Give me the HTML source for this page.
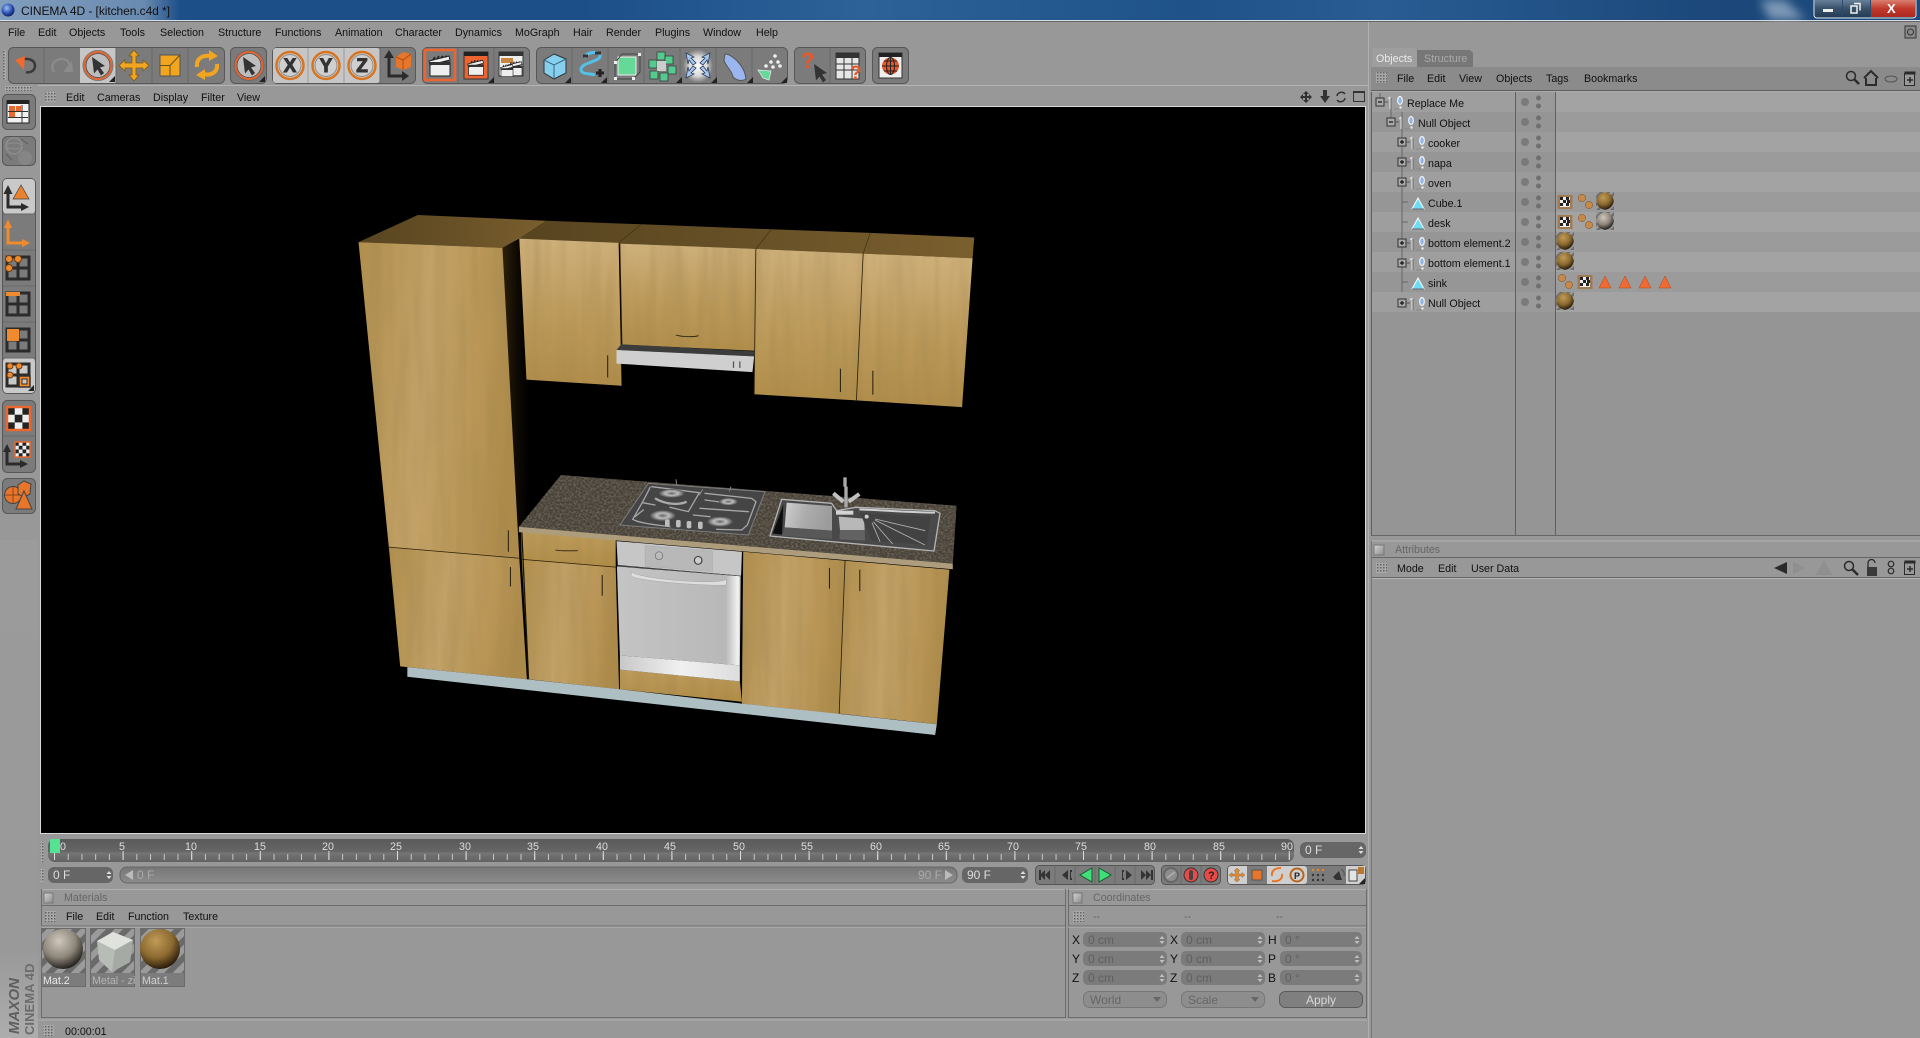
<!DOCTYPE html>
<html lang="en"><head><meta charset="utf-8"><title>CINEMA 4D - [kitchen.c4d *]</title>
<style>
html,body{margin:0;padding:0;background:#989898;width:1920px;height:1038px;overflow:hidden}
svg{display:block;position:absolute;left:0;top:0}
text{font-family:"Liberation Sans",sans-serif;font-size:10.7px;fill:#111}
.dim{fill:#666}.lt{fill:#ddd}.fld{fill:#5f5f5f;font-size:12px}.w{fill:#e8e8e8}
</style></head><body>
<svg width="1920" height="1038" viewBox="0 0 1920 1038" xmlns="http://www.w3.org/2000/svg">
<defs>
<pattern id="gr" width="3" height="3" patternUnits="userSpaceOnUse"><rect width="3" height="3" fill="#a8a8a8"/><rect width="1.500" height="1.500" fill="#626262"/></pattern>
<pattern id="hat" width="12" height="12" patternUnits="userSpaceOnUse" patternTransform="rotate(45)"><rect width="12" height="12" fill="#9b9b9b"/><rect width="6" height="12" fill="#6a6a6a"/></pattern>
<pattern id="hat2" width="5" height="5" patternUnits="userSpaceOnUse" patternTransform="rotate(45)"><rect width="5" height="5" fill="#9a9a9a"/><rect width="2.500" height="5" fill="#6e6e6e"/></pattern>
<pattern id="tk" x="54" y="0" width="13.72" height="20" patternUnits="userSpaceOnUse"><rect width="1" height="20" fill="#c8c8c8"/></pattern>
<pattern id="tkb" x="54" y="0" width="68.6" height="20" patternUnits="userSpaceOnUse"><rect width="1" height="20" fill="#dcdcdc"/></pattern>
<pattern id="chk2" x="7" y="407" width="15.400" height="15.400" patternUnits="userSpaceOnUse"><rect width="15.400" height="15.400" fill="#eee"/><rect width="7.700" height="7.700" fill="#222"/><rect x="7.700" y="7.700" width="7.700" height="7.700" fill="#222"/></pattern>
<pattern id="chk3" x="15" y="442" width="7.500" height="7.500" patternUnits="userSpaceOnUse"><rect width="7.500" height="7.500" fill="#eee"/><rect width="3.750" height="3.750" fill="#222"/><rect x="3.750" y="3.750" width="3.750" height="3.750" fill="#222"/></pattern>
<linearGradient id="tb" x1="0" x2="1" y1="0" y2="0"><stop offset="0" stop-color="#1d4f88"/><stop offset=".3" stop-color="#1c4e88"/><stop offset=".45" stop-color="#2c6298"/><stop offset=".62" stop-color="#1e5288"/><stop offset=".72" stop-color="#285c92"/><stop offset=".9" stop-color="#1b477a"/><stop offset="1" stop-color="#1d4a7c"/></linearGradient>
<linearGradient id="gl" x1="0" x2="1" y1="0" y2="0"><stop offset="0" stop-color="#fff" stop-opacity=".6"/><stop offset=".8" stop-color="#fff" stop-opacity=".45"/><stop offset="1" stop-color="#fff" stop-opacity="0"/></linearGradient>
<linearGradient id="btn" x1="0" x2="0" y1="0" y2="1"><stop offset="0" stop-color="#9ab" stop-opacity=".55"/><stop offset=".5" stop-color="#456" stop-opacity=".6"/><stop offset="1" stop-color="#234" stop-opacity=".6"/></linearGradient>
<linearGradient id="cl" x1="0" x2="0" y1="0" y2="1"><stop offset="0" stop-color="#d98070"/><stop offset=".5" stop-color="#c2392b"/><stop offset="1" stop-color="#a82a20"/></linearGradient>
<linearGradient id="str" x1="0" x2="0" y1="0" y2="1"><stop offset="0" stop-color="#9c9c9c"/><stop offset=".82" stop-color="#999"/><stop offset="1" stop-color="#b2b2b2"/></linearGradient>
<linearGradient id="tl" x1="0" x2="0" y1="0" y2="1"><stop offset="0" stop-color="#5a5a5a"/><stop offset=".55" stop-color="#666"/><stop offset=".6" stop-color="#757575"/><stop offset="1" stop-color="#626262"/></linearGradient>
<linearGradient id="sl" x1="0" x2="0" y1="0" y2="1"><stop offset="0" stop-color="#777"/><stop offset="1" stop-color="#8c8c8c"/></linearGradient>
<linearGradient id="box" x1="0" y1="0" x2="1" y2="1"><stop offset="0" stop-color="#d4d4d4"/><stop offset="1" stop-color="#8a8a8a"/></linearGradient>
<linearGradient id="w1" x1="0" x2="1" y1="0" y2=".15"><stop offset="0" stop-color="#b08e4e"/><stop offset=".45" stop-color="#c3a268"/><stop offset=".8" stop-color="#b99657"/><stop offset="1" stop-color="#ad8b4c"/></linearGradient>
<linearGradient id="w2" x1="0" x2="0" y1="0" y2="1"><stop offset="0" stop-color="#ceb07a"/><stop offset=".5" stop-color="#be9c5e"/><stop offset="1" stop-color="#b08d4a"/></linearGradient>
<linearGradient id="w3" x1="0" x2="0" y1="0" y2="1"><stop offset="0" stop-color="#bd9b5a"/><stop offset="1" stop-color="#b08d48"/></linearGradient>
<linearGradient id="tp" x1="0" x2="1" y1="0" y2="0"><stop offset="0" stop-color="#574420"/><stop offset=".5" stop-color="#675026"/><stop offset="1" stop-color="#7a5f2e"/></linearGradient>
<linearGradient id="sd" x1="0" x2="1" y1="0" y2="0"><stop offset="0" stop-color="#2e2009"/><stop offset=".55" stop-color="#0d0903"/><stop offset="1" stop-color="#000"/></linearGradient>
<linearGradient id="ov" x1="0" x2="1" y1="0" y2="0"><stop offset="0" stop-color="#c4c4c4"/><stop offset=".88" stop-color="#b8b8b8"/><stop offset=".98" stop-color="#f4f4f4"/><stop offset="1" stop-color="#bbb"/></linearGradient>
<linearGradient id="ovb" x1="0" x2="1" y1="0" y2="0"><stop offset="0" stop-color="#c8c8c8"/><stop offset=".5" stop-color="#f0f0f0"/><stop offset="1" stop-color="#ddd"/></linearGradient>
<linearGradient id="bas" x1="0" x2="1" y1="0" y2=".2"><stop offset="0" stop-color="#d0d0d0"/><stop offset=".5" stop-color="#acacac"/><stop offset="1" stop-color="#9c9c9c"/></linearGradient>
<radialGradient id="sb" cx=".4" cy=".3" r=".75"><stop offset="0" stop-color="#c09a58"/><stop offset=".55" stop-color="#8c6a30"/><stop offset="1" stop-color="#1b1206"/></radialGradient>
<radialGradient id="sg" cx=".4" cy=".3" r=".75"><stop offset="0" stop-color="#cfc7bb"/><stop offset=".55" stop-color="#8f877c"/><stop offset="1" stop-color="#15130f"/></radialGradient>
<radialGradient id="glow"><stop offset="0" stop-color="#fff"/><stop offset=".6" stop-color="#eee" stop-opacity=".8"/><stop offset="1" stop-color="#ccc" stop-opacity="0"/></radialGradient>
<radialGradient id="bl" cx=".4" cy=".35" r=".7"><stop offset="0" stop-color="#9cc0f0"/><stop offset=".6" stop-color="#2a4fb0"/><stop offset="1" stop-color="#0b1a50"/></radialGradient>
<radialGradient id="burn"><stop offset="0" stop-color="#666"/><stop offset=".5" stop-color="#bdbdbd"/><stop offset="1" stop-color="#505050"/></radialGradient>
<filter id="grain" x="0" y="0" width="100%" height="100%"><feTurbulence type="fractalNoise" baseFrequency=".04 .003" numOctaves="2" seed="4"/><feColorMatrix values="0 0 0 0 .35  0 0 0 0 .24  0 0 0 0 .08  .75 0 0 0 -.26"/><feComposite in2="SourceAlpha" operator="in" result="n"/><feMerge><feMergeNode in="SourceGraphic"/><feMergeNode in="n"/></feMerge></filter>
<filter id="spk" x="0" y="0" width="100%" height="100%"><feTurbulence type="fractalNoise" baseFrequency=".18" numOctaves="2" seed="7"/><feColorMatrix values="0 0 0 0 .5  0 0 0 0 .45  0 0 0 0 .38  .5 0 0 0 -.2"/><feComposite in2="SourceAlpha" operator="in" result="n"/><feMerge><feMergeNode in="SourceGraphic"/><feMergeNode in="n"/></feMerge></filter>
<filter id="blr"><feGaussianBlur stdDeviation="5"/></filter>
<filter id="sft"><feGaussianBlur stdDeviation=".55"/></filter>

<polygon id="cur" points="-6,-8 7,1 2,2.5 6,8 3,10.5 -.5,4.5 -4,8.5" fill="#333"/>
<g id="ring"><circle r="13.5" fill="#bdbdbd" stroke="#e5632c" stroke-width="2"/><circle r="15" fill="none" stroke="#666" stroke-width=".8"/><circle r="12" fill="none" stroke="#444" stroke-width=".8"/></g>
<polygon id="sub" points="0,6 6,6 6,0" fill="#222"/>
<path id="grid" d="M-11-11H11V11H-11ZM0-11V11M-11 0H11" fill="none" stroke="#2b2b2b" stroke-width="3"/>
<g id="clap"><rect x="-10" y="-3" width="20" height="14" fill="#eee" stroke="#222"/><path d="M-11-4 9-9 10-5-10 0Z" fill="#eee" stroke="#222"/><path d="M-7-5-5-8M-3-6-1-9M1-7 3-9M5-8 7-9" stroke="#222" stroke-width="1.6"/><rect x="-10" y="-3" width="20" height="3" fill="#333"/></g>
<g id="nul"><path d="M-9-5V7M-9-5-11-3" fill="none" stroke="#e6e6e6"/><path d="M-8-4V7" stroke="#666"/><path d="M-5 7H0" stroke="#888"/><ellipse cx="1" cy="-1.500" rx="2.300" ry="4" fill="#8fb4e6" stroke="#f2f2f2" stroke-width="1.200"/><circle cx="1.500" cy="5.500" r="1.200" fill="#eee"/></g>
<g id="tri"><polygon points="-6,6 0,-5 6,6" fill="#6fdcf5" stroke="#fff"/><path d="M-6 6H6" stroke="#445" stroke-width=".8"/></g>
<g id="pm"><rect x="-4" y="-4" width="8" height="8" fill="#a9a9a9" stroke="#333"/><path d="M-2 0H2M0-2V2" stroke="#111" stroke-width="1.2"/><path d="M4 0H8" stroke="#555"/></g>
<g id="mn"><rect x="-4" y="-4" width="8" height="8" fill="#a9a9a9" stroke="#333"/><path d="M-2 0H2" stroke="#111" stroke-width="1.2"/><path d="M4 0H8" stroke="#555"/></g>
<g id="dts"><circle cx="0" cy="0" r="4" fill="#7a7a7a"/><circle cx="13.500" cy="-4" r="2.500" fill="#6f6f6f"/><circle cx="13.500" cy="4" r="2.500" fill="#6f6f6f"/></g>
<g id="tck"><rect x="-7.500" y="-7" width="15" height="14" fill="#a07a50"/><rect x="-5" y="-5" width="10" height="10" fill="#eee"/><path d="M-5-5h3v3h-3zM1-5h3v3h-3zM-2-2h3v3h-3zM2-2h3v3h-3zM-5 1h3v3h-3zM1 1h3v3h-3z" fill="#222"/></g>
<g id="tdots"><circle cx="-3" cy="-4" r="3.600" fill="#c58a4a" stroke="#8a5a2a" stroke-width=".6"/><circle cx="4" cy="3" r="3.600" fill="#c58a4a" stroke="#8a5a2a" stroke-width=".6"/></g>
<g id="tsb"><rect x="-9" y="-9" width="18" height="18" fill="url(#hat2)"/><circle r="8.500" fill="url(#sb)"/></g>
<g id="tsg"><rect x="-9" y="-9" width="18" height="18" fill="url(#hat2)"/><circle r="8.500" fill="url(#sg)"/></g>
<polygon id="ttr" points="-6,6 0,-6 6,6" fill="#f06a33" stroke="#a34a22" stroke-width=".5"/>
<g id="spin"><path d="M-2.500-1 0-4 2.500-1ZM-2.500 1 0 4 2.500 1Z" fill="#ddd"/></g>
</defs>

<!-- window chrome -->
<rect width="1920" height="1038" fill="#989898"/>
<rect width="1920" height="21" fill="url(#tb)"/>
<rect y="20" width="1920" height="1" fill="#d5dde6"/>
<rect y="21" width="1920" height="1" fill="#666"/>
<rect x="0" y="0" width="180" height="20" fill="url(#gl)" opacity=".75"/>
<path d="M1760 0H1785L1806 20H1770Z" fill="#cfdde8" opacity=".55" filter="url(#blr)"/>
<circle cx="8" cy="10" r="6.500" fill="url(#bl)"/>
<text x="21" y="15" style="font-size:12px" textLength="149">CINEMA 4D - [kitchen.c4d *]</text>
<rect x="1814" y="-2" width="102" height="20" rx="3" fill="#2a4a6e" stroke="#dfe7ef"/>
<rect x="1815" y="0" width="27" height="17" fill="url(#btn)"/><rect x="1843" y="0" width="27" height="17" fill="url(#btn)"/><rect x="1871" y="0" width="44" height="17" fill="url(#cl)"/>
<rect x="1823" y="9" width="10" height="3" fill="#eee"/>
<path d="M1851 6h6v7h-6zM1854 3.500h6v7" fill="none" stroke="#eee" stroke-width="1.500"/>
<text x="1887" y="13" style="font-size:13px;font-weight:bold;fill:#fff">X</text>
<g><rect x="1905" y="26" width="11" height="12" fill="#8a8a8a" stroke="#333"/><circle cx="1910.500" cy="32" r="3" fill="none" stroke="#333"/></g>

<!-- main menu -->
<text x="8" y="36">File</text><text x="38" y="36">Edit</text><text x="69" y="36">Objects</text><text x="120" y="36">Tools</text><text x="160" y="36">Selection</text><text x="218" y="36">Structure</text><text x="275" y="36">Functions</text><text x="335" y="36">Animation</text><text x="395" y="36">Character</text><text x="455" y="36">Dynamics</text><text x="515" y="36">MoGraph</text><text x="573" y="36">Hair</text><text x="606" y="36">Render</text><text x="655" y="36">Plugins</text><text x="703" y="36">Window</text><text x="756" y="36">Help</text>

<!-- grips -->
<rect x="3" y="50" width="3" height="30" fill="url(#gr)"/>
<rect x="5" y="86" width="27" height="5" fill="url(#gr)"/>
<rect x="45" y="91" width="11" height="11" fill="url(#gr)"/>
<rect y="85" x="38" width="1330" height="1" fill="#b4b4b4"/>

<!-- top toolbar groups -->
<g fill="#7b7b7b" stroke="#585858">
<rect x="8.500" y="47.500" width="216" height="36" rx="5"/><rect x="230.500" y="47.500" width="36" height="36" rx="5"/><rect x="272.500" y="47.500" width="143" height="36" rx="5"/><rect x="422.500" y="47.500" width="107" height="36" rx="5"/><rect x="536.500" y="47.500" width="251" height="36" rx="5"/><rect x="794.500" y="47.500" width="71" height="36" rx="5"/><rect x="872.500" y="47.500" width="36" height="36" rx="5"/>
</g>
<g fill="#c6c6c6"><rect x="80" y="48" width="36" height="35"/><rect x="273" y="48" width="107" height="35" rx="3"/></g>
<path d="M44 48v35M116 48v35M152 48v35M188 48v35M380 48v35M458 48v35M494 48v35M572 48v35M608 48v35M644 48v35M680 48v35M716 48v35M752 48v35M830 48v35" stroke="#686868"/>
<path d="M308 48v35M344 48v35" stroke="#9c9c9c"/>
<!-- undo -->
<path d="M20 61C26 57 35 59 35 66 35 72 28 73 26 72" fill="none" stroke="#3a3a3a" stroke-width="2.500"/><polygon points="15,60 25,56 24,70" fill="#ee6a30"/>
<path d="M54 72C50 66 54 59 62 59 69 59 72 66 67 71" fill="none" stroke="#8a8a8a" stroke-width="2.500"/><polygon points="72,61 63,72 73,72" fill="#8b8b8b"/>
<!-- select -->
<use href="#ring" x="98" y="65.500"/><use href="#cur" x="98" y="65"/><use href="#sub" x="109" y="76"/>
<!-- move -->
<path d="M134 50 139 56H136V63H143V60L149 65.500 143 71V68H136V75H139L134 81 129 75H132V68H125V71L119 65.500 125 60V63H132V56H129Z" fill="#f2a51f" stroke="#7a5a1a" stroke-width=".8"/>
<!-- scale -->
<rect x="160" y="55" width="20" height="21" fill="#f2a51f" stroke="#555"/><path d="M170 65.500 180 55M170 65.500V76M160 65.500H170" stroke="#66501e"/>
<!-- rotate -->
<path d="M197 67C196 58 203 55 211 56M217 64C218 73 210 76 203 74" fill="none" stroke="#f2a51f" stroke-width="4"/><polygon points="209,50 218,56 209,61" fill="#f2a51f"/><polygon points="205,69 196,75 205,80" fill="#f2a51f"/>
<!-- live select -->
<use href="#ring" x="249" y="65.500"/><use href="#cur" x="249" y="65"/><use href="#sub" x="259" y="76"/>
<!-- xyz -->
<g style="text-anchor:middle">
<g fill="#cfcfcf" stroke="#d9731e" stroke-width="2.500"><circle cx="290" cy="65.500" r="13.500"/><circle cx="326" cy="65.500" r="13.500"/><circle cx="362" cy="65.500" r="13.500"/></g>
<g fill="none" stroke="#8c8c8c"><circle cx="290" cy="65.500" r="11"/><circle cx="326" cy="65.500" r="11"/><circle cx="362" cy="65.500" r="11"/></g>
<text x="290" y="72" style="font-size:19px;font-weight:bold;fill:#333;stroke:#333;stroke-width:1">X</text><text x="326" y="72" style="font-size:19px;font-weight:bold;fill:#333;stroke:#333;stroke-width:1">Y</text><text x="362" y="72" style="font-size:19px;font-weight:bold;fill:#333;stroke:#333;stroke-width:1">Z</text>
</g>
<!-- world -->
<path d="M389 54V76H407" fill="none" stroke="#2b2b2b" stroke-width="3"/><polygon points="389,50 384,58 394,58" fill="#2b2b2b"/><polygon points="409,76 402,71 402,81" fill="#2b2b2b"/>
<path d="M396 57 403 52 411 54V67L403 70 396 67Z" fill="#e8762a"/><path d="M396 57 403 60 411 54M403 60V70" stroke="#a5511c" fill="none"/>
<!-- clappers -->
<rect x="425" y="50" width="30" height="30" fill="none" stroke="#ec6530" stroke-width="2.500"/><use href="#clap" x="440" y="65"/>
<rect x="464" y="52" width="24" height="27" fill="#ec6530" stroke="#333"/><rect x="464" y="52" width="24" height="4" fill="#222"/><g transform="translate(476,67) scale(.75)"><use href="#clap"/></g><use href="#sub" x="488" y="77"/>
<rect x="499" y="52" width="24" height="24" fill="#eee" stroke="#333"/><rect x="499" y="52" width="24" height="4" fill="#333"/><rect x="501" y="58" width="12" height="5" fill="#c9863e"/><g transform="translate(515,68) scale(.7)"><use href="#clap"/></g><g transform="translate(507,70) scale(.6)"><use href="#clap"/></g>
<!-- primitives -->
<polygon points="554,54 566,59 566,73 554,79 544,73 544,60" fill="#86cfee" stroke="#333"/><path d="M544 60 554 65 566 59M554 65V79" stroke="#3b6a80" fill="none"/><use href="#sub" x="565" y="77"/>
<path d="M586 58C582 53 600 50 600 55 602 62 580 62 581 70 582 75 590 73 595 75" fill="none" stroke="#55c0e8" stroke-width="3"/><path d="M583 56H588M595 53H601" stroke="#333" stroke-width="3"/><path d="M596 73H604M600 69V77" stroke="#222" stroke-width="3"/><use href="#sub" x="601" y="77"/>
<rect x="618" y="57" width="18" height="18" fill="#66d898" stroke="#eee"/><path d="M615 63 622 54H640V72L633 79H615Z" fill="none" stroke="#444"/><g fill="#eee"><rect x="614" y="61" width="3" height="3"/><rect x="638" y="53" width="3" height="3"/><rect x="632" y="77" width="3" height="3"/><rect x="614" y="77" width="3" height="3"/></g>
<g fill="#55c98e" stroke="#333" stroke-width=".7"><rect x="657" y="52" width="8" height="8"/><rect x="665" y="56" width="8" height="8"/><rect x="668" y="66" width="8" height="8"/><rect x="660" y="73" width="8" height="8"/><rect x="650" y="71" width="8" height="8"/><rect x="649" y="60" width="8" height="8"/></g><rect x="657" y="61" width="9" height="10" fill="#ccc"/><use href="#sub" x="676" y="77"/>
<ellipse cx="698" cy="66" rx="15" ry="17" fill="url(#glow)"/><g stroke="#2c3e5a" fill="#a9c8ee" stroke-width=".8"><path d="M686 53 694 57 691 58 696 63 693 65 689 60 688 64Z"/><path d="M710 53 702 57 705 58 700 63 703 65 707 60 708 64Z"/><path d="M686 78 694 74 691 73 696 68 693 66 689 71 688 67Z"/><path d="M710 78 702 74 705 73 700 68 703 66 707 71 708 67Z"/></g><use href="#sub" x="711" y="77"/>
<path d="M725 54C732 54 745 66 746 79 741 82 736 80 733 77 732 70 725 66 724 60Z" fill="#9bb5ee" stroke="#555"/><use href="#sub" x="747" y="77"/>
<g fill="#eee"><circle cx="775" cy="56" r="1.800"/><circle cx="771" cy="62" r="1.800"/><circle cx="778" cy="62" r="1.800"/><circle cx="766" cy="66" r="1.800"/><circle cx="773" cy="67" r="1.800"/><circle cx="780" cy="66" r="1.800"/></g><polygon points="758,70 771,71 769,80 763,78" fill="#66d898" stroke="#eee" stroke-width=".7"/><use href="#sub" x="781" y="77"/>
<!-- help -->
<text x="801" y="68" style="font-size:22px;font-weight:bold;fill:#e8582a">?</text><g transform="translate(820,72)"><use href="#cur"/></g>
<rect x="836" y="53" width="23" height="26" fill="#e6e6e6" stroke="#333"/><rect x="836" y="53" width="23" height="5" fill="#333"/><path d="M836 64H859M836 70H859M844 58V79M852 58V79" stroke="#333"/><text x="850" y="79" style="font-size:19px;font-weight:bold;fill:#e8582a">?</text>
<rect x="879" y="53" width="23" height="25" fill="#eee" stroke="#333"/><rect x="879" y="53" width="23" height="4" fill="#222"/><circle cx="890.500" cy="66" r="8.500" fill="#e8582a"/><path d="M882 66H899M890.500 57.500V74.500M884 61H897M884 71H897" stroke="#222" fill="none"/><ellipse cx="890.500" cy="66" rx="4" ry="8.500" fill="none" stroke="#222"/>

<!-- viewport menu -->
<text x="66" y="101">Edit</text><text x="97" y="101">Cameras</text><text x="153" y="101">Display</text><text x="201" y="101">Filter</text><text x="237" y="101">View</text>
<g fill="#333"><path d="M1306 91 1309 94H1307V96H1309V94L1312 97 1309 100V98H1307V100H1309L1306 103 1303 100H1305V98H1303V100L1300 97 1303 94V96H1305V94H1303Z"/><path d="M1323 90H1327V96H1330L1325 103 1320 96H1323Z"/></g><g fill="none" stroke="#333" stroke-width="1.500"><path d="M1337 96A4.500 4.500 0 0 1 1345 94M1345 98A4.500 4.500 0 0 1 1337 100"/></g>
<rect x="1353.500" y="91.500" width="11" height="10" fill="none" stroke="#333"/><rect x="1353" y="91" width="12" height="2" fill="#333"/>

<!-- left toolbar -->
<rect x="0" y="540" width="38" height="498" fill="url(#str)" opacity=".8"/>
<g fill="#7b7b7b" stroke="#585858"><rect x="2.500" y="94.500" width="33" height="35" rx="5"/><rect x="2.500" y="136.500" width="33" height="29" rx="5"/><rect x="2.500" y="178.500" width="33" height="215" rx="5"/><rect x="2.500" y="400.500" width="33" height="72" rx="5"/><rect x="2.500" y="478.500" width="33" height="35" rx="5"/></g>
<rect x="3" y="179" width="32" height="35" rx="4" fill="#c9c9c9"/><rect x="3" y="358" width="32" height="35" rx="4" fill="#c9c9c9"/>
<path d="M3 250H35M3 286H35M3 322H35M3 358H35M3 436H35M3 214H35" stroke="#686868"/>
<!-- layout icon -->
<rect x="7" y="101" width="22" height="22" fill="#f2f2f2" stroke="#222"/><rect x="7" y="100" width="22" height="4" fill="#222"/><rect x="9" y="106" width="6" height="5" fill="#e8682f"/><rect x="16" y="106" width="5" height="5" fill="#e8682f"/><rect x="9" y="112" width="6" height="5" fill="#e8682f"/><path d="M22 105V123M8 117.500H28M8 111.500H28" stroke="#333" fill="none"/>
<!-- dim spheres -->
<circle cx="14" cy="146" r="8" fill="none" stroke="#8e8e8e" stroke-width="1.500"/><ellipse cx="14" cy="146" rx="8" ry="3" fill="none" stroke="#8e8e8e"/><circle cx="25" cy="158" r="7" fill="#8e8e8e" opacity=".55"/><path d="M21 139 28 144M6 154 12 160" stroke="#666" stroke-width="1.500"/>
<!-- axis & tri -->
<path d="M8 190V207H25" fill="none" stroke="#2b2b2b" stroke-width="3"/><polygon points="8,185 3.500,194 12.500,194" fill="#2b2b2b"/><polygon points="29,207 21,203 21,211" fill="#2b2b2b"/><polygon points="13,199 21,185 29,199" fill="#e9822b" stroke="#444" stroke-width=".7"/>
<path d="M8 224V243H25" fill="none" stroke="#ef8a2e" stroke-width="3"/><polygon points="8,219 4,228 12,228" fill="#ef8a2e"/><polygon points="30,243 22,239 22,247" fill="#ef8a2e"/>
<use href="#grid" x="18" y="268"/><g fill="#ef8a2e" stroke="#6b3d12"><circle cx="9" cy="259" r="3.500"/><circle cx="18" cy="259" r="3.500"/><circle cx="9" cy="268" r="3.500"/></g>
<use href="#grid" x="18" y="304"/><rect x="6" y="292" width="14" height="4" fill="#ef8a2e"/>
<use href="#grid" x="18" y="340"/><rect x="7" y="329" width="12" height="12" fill="#ef8a2e"/>
<use href="#grid" x="18" y="375"/><g fill="#ef8a2e" stroke="#6b3d12"><circle cx="10" cy="366" r="3"/><circle cx="19" cy="366" r="3"/><circle cx="10" cy="375" r="3"/></g><rect x="19" y="376" width="11" height="11" fill="#ef8a2e" stroke="#333" stroke-width="1.500"/><rect x="22" y="379" width="5" height="5" fill="#c9c9c9" stroke="#333"/><use href="#sub" x="28" y="385"/>
<rect x="7" y="407" width="23" height="23" fill="url(#chk2)" stroke="#e8682f" stroke-width="2.500"/>
<path d="M7 448V464H24" fill="none" stroke="#2b2b2b" stroke-width="3"/><polygon points="7,444 3,452 11,452" fill="#2b2b2b"/><polygon points="28,464 20,460 20,468" fill="#2b2b2b"/><rect x="15" y="442" width="15" height="15" fill="url(#chk3)" stroke="#e8682f" stroke-width="1.500"/>
<circle cx="13" cy="495" r="8.500" fill="#e8762a" stroke="#444"/><path d="M5 495H21M13 487V503" stroke="#8e4415" fill="none"/><polygon points="18,485 24,481 31,484 30,494 24,497 18,494" fill="#e8762a" stroke="#444"/><polygon points="24,491 32,509 16,509" fill="#e8762a" stroke="#444"/>
<text transform="translate(34,1035) rotate(-90)" style="font-size:13px;fill:#6c6c6c;font-weight:bold;letter-spacing:.5px" textLength="72">CINEMA 4D</text>
<text transform="translate(19,1034) rotate(-90)" style="font-size:15px;fill:#5e5e5e;font-weight:bold;font-style:italic" textLength="56">MAXON</text>

<!-- viewport -->
<rect x="40.500" y="106.500" width="1325" height="727" fill="#000" stroke="#d8d8d8"/>

<!-- kitchen -->
<g transform="translate(340 200) scale(.42088 .35714)">
<polygon points="386,134 426,110 450,500 450,780 426,1003" fill="url(#sd)"/>
<polygon points="44,118 185,42 490,58 426,108 386,134" fill="url(#tp)"/>
<polygon points="426,108 490,58 716,68 1025,82 1260,92 1507,105 1503,163 1243,150 988,137 665,122" fill="url(#tp)"/>
<g filter="url(#grain)">
<polygon points="44,118 386,134 426,1003 116,972" fill="url(#w1)"/>
<polygon points="116,972 426,1003 444,1342 143,1306" fill="url(#w1)"/>
<polygon points="426,108 662,120 669,520 443,503" fill="url(#w2)"/>
<polygon points="665,122 988,137 986,422 670,405" fill="url(#w2)"/>
<polygon points="988,137 1243,150 1227,561 984,544" fill="url(#w2)"/>
<polygon points="1243,150 1503,163 1478,580 1227,561" fill="url(#w2)"/>
<polygon points="430,930 655,950 655,1028 432,1006" fill="url(#w3)"/>
<polygon points="432,1006 655,1028 663,1370 448,1342" fill="url(#w1)"/>
<polygon points="665,1315 950,1348 955,1405 665,1370" fill="url(#w3)"/>
<polygon points="958,985 1200,1010 1186,1440 955,1410" fill="url(#w1)"/>
<polygon points="1200,1010 1448,1035 1418,1468 1186,1438" fill="url(#w1)"/>
</g>
<path d="M988 137 1025 82M662 120 716 68M1243 150 1260 92" stroke="#3b2c12" stroke-width="1.500" fill="none"/>
<path d="M665 122 670 405M988 137 984 544M1243 150 1227 561M116 972 426 1003M430 1006 655 1028M1200 1010 1186 1438" stroke="#2c200b" stroke-width="2" fill="none"/>
<path d="M432 930 448 1342" stroke="#1a1206" stroke-width="3" fill="none"/>
<!-- plinth -->
<polygon points="160,1308 444,1342 665,1370 955,1410 1418,1468 1414,1498 160,1335" fill="#aebfc3"/>
<!-- counter -->
<polygon points="525,770 1465,856 1456,1018 425,915" fill="#4a4239" filter="url(#spk)"/>
<polygon points="425,915 1456,1018 1456,1034 425,930" fill="#ad9d7d"/>
<!-- oven -->
<polygon points="657,955 955,985 953,1052 660,1022" fill="#c6c6c6"/>
<polygon points="725,968 885,982 885,1040 725,1026" fill="#b8b8b8" stroke="#a4a4a4"/>
<ellipse cx="758" cy="996" rx="9" ry="11" fill="#bbb" stroke="#777" stroke-width="2"/><ellipse cx="851" cy="1009" rx="9" ry="11" fill="#ccc" stroke="#444" stroke-width="3"/>
<polygon points="658,1026 952,1053 950,1303 665,1275" fill="url(#ov)"/>
<path d="M660 1024 953 1053" stroke="#555" stroke-width="2"/>
<path d="M692 1040C700 1060 900 1080 918 1062V1078C890 1082 700 1068 692 1052Z" fill="#dedede" stroke="#999"/>
<polygon points="665,1275 950,1303 950,1348 665,1315" fill="url(#ovb)"/>
<!-- hood -->
<polygon points="668,404 986,424 984,438 657,420" fill="#3c3c3c"/>
<polygon points="657,420 984,438 980,482 657,458" fill="#cfcfcf"/>
<path d="M935 452V470M950 452V470" stroke="#555" stroke-width="3"/>
<!-- handles -->
<g fill="none" stroke="#2a2210" stroke-width="2.500">
<path d="M400 925V985M405 1028V1082M623 1050V1108M636 435V497M1189 472V538M1266 478V545M1163 1030V1088M1235 1035V1095"/>
<path d="M798 378C815 384 840 384 852 380M512 980C525 984 550 982 565 982"/>
</g>
</g>

<!-- hob (crop coordinates) -->
<g transform="translate(610 470) scale(.33333)" filter="url(#sft)">
<polygon points="115,40 465,65 415,195 30,165" fill="#444" stroke="#7e7e7e" stroke-width="3"/>
<g fill="none" stroke="#a6a6a6" stroke-width="4" stroke-linecap="round">
<path d="M120 52C110 75 90 110 68 148 90 160 140 165 180 170"/>
<path d="M125 50 268 68 235 125 180 112M98 98 135 105M100 120 75 140"/>
<path d="M285 70 425 85 438 95 412 165 395 180 320 178M270 115 415 125M285 90 330 96M250 135 300 140"/>
</g>
<ellipse cx="185" cy="70" rx="38" ry="13" fill="url(#burn)"/><ellipse cx="355" cy="95" rx="28" ry="11" fill="url(#burn)"/><ellipse cx="158" cy="137" rx="38" ry="16" fill="url(#burn)"/><ellipse cx="330" cy="155" rx="38" ry="15" fill="url(#burn)"/>
<path d="M135 85C170 105 210 105 230 95" fill="none" stroke="#aaa" stroke-width="7"/>
<g fill="#bdbdbd"><rect x="165" y="148" width="14" height="22" rx="5"/><rect x="198" y="150" width="14" height="22" rx="5"/><rect x="230" y="153" width="14" height="22" rx="5"/><rect x="264" y="155" width="14" height="22" rx="5"/></g>
<path d="M198 28 200 44M363 50 358 64M278 58 268 76" stroke="#888" stroke-width="3"/>
</g>
<!-- sink (crop coordinates) -->
<g transform="translate(770 470) scale(.33333)" filter="url(#sft)">
<path d="M35 88 185 100 200 122 258 112 495 122 510 130 492 243 0 198Z" fill="#4a4a4a" stroke="#b4b4b4" stroke-width="4" stroke-linejoin="round"/>
<polygon points="50,98 186,108 186,182 44,172" fill="url(#bas)"/>
<polygon points="44,172 186,182 186,208 36,197" fill="#585858"/>
<polygon points="40,104 8,190 36,194" fill="#0a0a0a"/>
<polygon points="206,140 282,146 284,180 210,180" fill="#b8b8b8"/>
<polygon points="210,180 284,180 285,212 208,208" fill="#626262"/>
<polygon points="270,128 482,140 470,225 305,212" fill="#434343"/>
<path d="M268 118C330 120 430 128 495 128" fill="none" stroke="#cfcfcf" stroke-width="6"/>
<path d="M315 147 466 182M315 150 465 225M310 155 368 222M306 158 330 215" stroke="#b0b0b0" stroke-width="2.500" fill="none"/>
<circle cx="290" cy="140" r="6" fill="#ccc"/>
<path d="M225 22V50 M228 50V112" stroke="#aaa" stroke-width="10" fill="none"/><path d="M190 70 220 95M268 72 236 95" stroke="#c0c0c0" stroke-width="12" fill="none"/>
<rect x="198" y="122" width="52" height="12" fill="#d4d4d4"/>
</g>

<!-- timeline -->
<rect x="40" y="841" width="4" height="22" fill="url(#gr)"/>
<rect x="48" y="839" width="1246" height="23" rx="7" fill="url(#tl)"/>
<rect x="54" y="854" width="1236" height="6" fill="url(#tk)"/>
<rect x="54" y="851" width="1236" height="9" fill="url(#tkb)"/>
<rect x="50" y="839" width="10" height="14" fill="#55e292"/>
<g class="lt" style="text-anchor:middle">
<text x="63" y="850" class="lt">0</text><text x="122" y="850" class="lt">5</text><text x="191" y="850" class="lt">10</text><text x="260" y="850" class="lt">15</text><text x="328" y="850" class="lt">20</text><text x="396" y="850" class="lt">25</text><text x="465" y="850" class="lt">30</text><text x="533" y="850" class="lt">35</text><text x="602" y="850" class="lt">40</text><text x="670" y="850" class="lt">45</text><text x="739" y="850" class="lt">50</text><text x="807" y="850" class="lt">55</text><text x="876" y="850" class="lt">60</text><text x="944" y="850" class="lt">65</text><text x="1013" y="850" class="lt">70</text><text x="1081" y="850" class="lt">75</text><text x="1150" y="850" class="lt">80</text><text x="1219" y="850" class="lt">85</text><text x="1287" y="850" class="lt">90</text>
</g>
<rect x="1300" y="842" width="66" height="16" rx="6" fill="#666"/><text x="1305" y="854" class="lt" style="font-size:12px">0 F</text><use href="#spin" x="1361" y="850"/>

<!-- transport row -->
<rect x="40" y="869" width="4" height="13" fill="url(#gr)"/>
<rect x="48" y="867" width="65" height="16" rx="6" fill="#666"/><text x="53" y="879" class="lt" style="font-size:12px">0 F</text><use href="#spin" x="109" y="875"/>
<rect x="120" y="867" width="837" height="16" rx="7" fill="url(#sl)" stroke="#666"/>
<polygon points="133,870 133,880 125,875" fill="#bbb"/><text x="137" y="879" style="font-size:12px;fill:#aaa">0 F</text>
<text x="918" y="879" style="font-size:12px;fill:#aaa">90 F</text><polygon points="945,870 945,880 953,875" fill="#bbb"/>
<rect x="962" y="867" width="66" height="16" rx="6" fill="#666"/><text x="967" y="879" class="lt" style="font-size:12px">90 F</text><use href="#spin" x="1023" y="875"/>
<g fill="#7b7b7b" stroke="#555"><rect x="1035.500" y="865.500" width="119" height="19" rx="4"/><rect x="1161.500" y="865.500" width="59" height="19" rx="4"/><rect x="1227.500" y="865.500" width="138" height="19" rx="4"/></g>
<path d="M1055 866v18M1075 866v18M1095 866v18M1115 866v18M1135 866v18M1181 866v18M1201 866v18" stroke="#686868"/>
<g fill="#333"><path d="M1039 870h2v10h-2zM1050 870v10l-5-5zM1045 870v10l-5-5z"/><path d="M1068 870v10l-6-5zM1070 870h2v2h-1v6h1v2h-2z"/><path d="M1122 870h2v2h-1v6h1v2h-2zM1126 870l6 5-6 5z"/><path d="M1141 870l5 5-5 5zM1146 870l5 5-5 5zM1151 870h2v10h-2z"/></g>
<polygon points="1092,868 1092,882 1080,875" fill="#3fe07a" stroke="#1a5a30"/><polygon points="1099,868 1099,882 1111,875" fill="#3fe07a" stroke="#1a5a30"/>
<circle cx="1171" cy="875" r="7" fill="#8c8c8c" stroke="#666" stroke-width="2"/><path d="M1167 878 1175 872" stroke="#aaa" stroke-width="2"/>
<circle cx="1191" cy="875" r="7" fill="#e84a48" stroke="#333"/><rect x="1189" y="870" width="4" height="10" rx="2" fill="#444"/>
<circle cx="1211" cy="875" r="7" fill="#e84a48" stroke="#333"/><text x="1208" y="879" style="font-size:11px;font-weight:bold;fill:#222">?</text>
<rect x="1228" y="866" width="79" height="18" rx="3" fill="#cfcfcf"/><rect x="1247" y="866" width="20" height="18" fill="#7b7b7b"/><rect x="1346" y="866" width="19" height="18" fill="#cfcfcf"/>
<path d="M1237 868 1240 871H1238.500V874H1242V872.500L1245 875 1242 877.500V876H1238.500V879.500H1240L1237 882 1234 879.500H1235.500V876H1232V877.500L1229 875 1232 872.500V874H1235.500V871H1234Z" fill="#e58a2a" stroke="#666" stroke-width=".4"/>
<rect x="1252" y="870" width="10" height="10" fill="#e8762a" stroke="#555"/>
<path d="M1272 876C1271 870 1276 868 1281 868M1282 874C1283 880 1277 882 1272 881" fill="none" stroke="#e8762a" stroke-width="2"/>
<circle cx="1297" cy="875" r="6.500" fill="#cfcfcf" stroke="#b9651e" stroke-width="2"/><text x="1294" y="879" style="font-size:9px;font-weight:bold;fill:#222">P</text>
<g fill="#333"><circle cx="1313" cy="875" r="1.200"/><circle cx="1318" cy="875" r="1.200"/><circle cx="1323" cy="875" r="1.200"/><circle cx="1313" cy="880" r="1.200"/><circle cx="1318" cy="880" r="1.200"/><circle cx="1323" cy="880" r="1.200"/></g>
<g fill="#e8862a"><circle cx="1313" cy="870" r="1.200"/><circle cx="1318" cy="870" r="1.200"/><circle cx="1323" cy="870" r="1.200"/></g>
<path d="M1333 877 1339 871 1342 880H1336Z" fill="#333"/><path d="M1341 869A6 6 0 0 1 1344 876" stroke="#555" fill="none"/>
<rect x="1349" y="870" width="8" height="11" fill="#e4e4e4" stroke="#444"/><rect x="1358" y="867" width="6" height="7" fill="#b9782e"/><use href="#sub" x="1359" y="878"/>

<!-- materials -->
<path d="M41 889.500H1367" stroke="#b0b0b0"/>
<path d="M41.500 889V1017.500H1065.500V889M1068.500 889V1017.500H1366.500V889M41 905.500H1066M1068 905.500H1366" fill="none" stroke="#6c6c6c"/>
<path d="M41 926H1065M1068 926H1366" stroke="#6c6c6c"/><path d="M41 927H1065M1068 927H1366" stroke="#b5b5b5"/>
<rect x="44" y="893" width="9" height="10" fill="url(#box)" stroke="#777"/>
<text x="64" y="901" class="dim">Materials</text>
<rect x="45" y="911" width="11" height="11" fill="url(#gr)"/>
<text x="66" y="920">File</text><text x="96" y="920">Edit</text><text x="128" y="920">Function</text><text x="183" y="920">Texture</text>
<g>
<rect x="41.500" y="928.500" width="44" height="58" fill="url(#hat)" stroke="#6a6a6a"/><rect x="42" y="973" width="43" height="13" fill="#7c7c7c"/>
<circle cx="63" cy="949" r="20" fill="url(#sg)"/>
<text x="43" y="984" class="w">Mat.2</text>
<rect x="90.500" y="928.500" width="44" height="58" fill="url(#hat)" stroke="#6a6a6a"/><rect x="91" y="973" width="43" height="13" fill="#7c7c7c"/>
<polygon points="97,941 113,932 133,940 130,962 112,972 99,960" fill="#b8bcb6"/><polygon points="97,941 113,932 133,940 115,950" fill="#dfe2dd"/><polygon points="115,950 133,940 130,962 112,972" fill="#a6aaa4"/>
<text x="92" y="984" style="fill:#b5b5b5">Metal - zi</text>
<rect x="140.500" y="928.500" width="44" height="58" fill="url(#hat)" stroke="#6a6a6a"/><rect x="141" y="973" width="43" height="13" fill="#7c7c7c"/>
<circle cx="160" cy="949" r="20" fill="url(#sb)"/>
<text x="142" y="984" style="fill:#d0d0d0">Mat.1</text>
</g>
<path d="M38 1020H1367" stroke="#b0b0b0"/>
<rect x="43" y="1025" width="11" height="11" fill="url(#gr)"/>
<text x="65" y="1035">00:00:01</text>

<!-- coordinates -->
<rect x="1073" y="893" width="9" height="10" fill="url(#box)" stroke="#777"/>
<text x="1093" y="901" class="dim">Coordinates</text>
<rect x="1073" y="911" width="11" height="11" fill="url(#gr)"/>
<text x="1093" y="920" class="dim">--</text><text x="1184" y="920" class="dim">--</text><text x="1276" y="920" class="dim">--</text>
<g fill="#7b7b7b">
<rect x="1083" y="932" width="84" height="15" rx="5"/><rect x="1181" y="932" width="84" height="15" rx="5"/><rect x="1280" y="932" width="82" height="15" rx="5"/>
<rect x="1083" y="951" width="84" height="15" rx="5"/><rect x="1181" y="951" width="84" height="15" rx="5"/><rect x="1280" y="951" width="82" height="15" rx="5"/>
<rect x="1083" y="970" width="84" height="15" rx="5"/><rect x="1181" y="970" width="84" height="15" rx="5"/><rect x="1280" y="970" width="82" height="15" rx="5"/>
</g>
<g>
<text x="1072" y="944" style="font-size:12px">X</text><text x="1170" y="944" style="font-size:12px">X</text><text x="1268" y="944" style="font-size:12px">H</text>
<text x="1072" y="963" style="font-size:12px">Y</text><text x="1170" y="963" style="font-size:12px">Y</text><text x="1268" y="963" style="font-size:12px">P</text>
<text x="1072" y="982" style="font-size:12px">Z</text><text x="1170" y="982" style="font-size:12px">Z</text><text x="1268" y="982" style="font-size:12px">B</text>
<text x="1088" y="944" class="fld">0 cm</text><text x="1186" y="944" class="fld">0 cm</text><text x="1285" y="944" class="fld">0 °</text>
<text x="1088" y="963" class="fld">0 cm</text><text x="1186" y="963" class="fld">0 cm</text><text x="1285" y="963" class="fld">0 °</text>
<text x="1088" y="982" class="fld">0 cm</text><text x="1186" y="982" class="fld">0 cm</text><text x="1285" y="982" class="fld">0 °</text>
</g>
<g opacity=".7"><use href="#spin" x="1162" y="940"/><use href="#spin" x="1260" y="940"/><use href="#spin" x="1357" y="940"/><use href="#spin" x="1162" y="959"/><use href="#spin" x="1260" y="959"/><use href="#spin" x="1357" y="959"/><use href="#spin" x="1162" y="978"/><use href="#spin" x="1260" y="978"/><use href="#spin" x="1357" y="978"/></g>
<g fill="#8d8d8d" stroke="#777"><rect x="1083.500" y="991.500" width="83" height="16" rx="6"/><rect x="1181.500" y="991.500" width="83" height="16" rx="6"/></g>
<text x="1090" y="1004" class="dim" style="font-size:12px">World</text><text x="1188" y="1004" class="dim" style="font-size:12px">Scale</text>
<path d="M1153 997H1161L1157 1002ZM1251 997H1259L1255 1002Z" fill="#666"/>
<rect x="1279.500" y="991.500" width="83" height="16" rx="6" fill="#7f7f7f" stroke="#5a5a5a"/><text x="1321" y="1004" style="font-size:12px;fill:#d8d8d8;text-anchor:middle">Apply</text>

<!-- right divider -->
<path d="M1368.500 22V1038" stroke="#b0b0b0"/>

<!-- objects panel -->
<path d="M1372 67V48Q1372 48 1376 48H1414L1417 51V67Z" fill="#9e9e9e"/>
<path d="M1417 67V50Q1417 50 1420 50H1470L1473 53V67Z" fill="#777"/>
<text x="1376" y="62" style="fill:#eaeaea">Objects</text><text x="1424" y="62" style="fill:#aaa">Structure</text>
<rect x="1371" y="67" width="549" height="23" fill="#8b8b8b"/>
<rect x="1376" y="72" width="11" height="11" fill="url(#gr)"/>
<text x="1397" y="82">File</text><text x="1427" y="82">Edit</text><text x="1459" y="82">View</text><text x="1496" y="82">Objects</text><text x="1546" y="82">Tags</text><text x="1584" y="82">Bookmarks</text>
<path d="M1371 90.500H1920" stroke="#5e5e5e"/><path d="M1371 91.500H1920" stroke="#aaa"/>
<g fill="none" stroke="#2b2b2b"><circle cx="1851" cy="76" r="4.500" stroke-width="1.500"/><path d="M1854 79 1859 84" stroke-width="2.500"/><path d="M1864 78 1871 71 1878 78M1866 78V85H1876V78" stroke-width="2"/><ellipse cx="1891" cy="79" rx="6" ry="3" stroke="#555"/><rect x="1904.500" y="73.500" width="10" height="12" fill="#999"/><rect x="1905" y="72" width="10" height="2" fill="#2b2b2b"/><path d="M1907 80H1913M1910 77V83" stroke-width="1.500"/></g>
<!-- rows -->
<rect x="1372" y="92" width="548" height="444" fill="#959595"/>
<g fill="#9e9e9e"><rect x="1372" y="92" width="143" height="20"/><rect x="1372" y="132" width="143" height="20"/><rect x="1372" y="172" width="143" height="20"/><rect x="1372" y="212" width="143" height="20"/><rect x="1372" y="252" width="143" height="20"/><rect x="1372" y="292" width="143" height="20"/></g>
<g fill="#969696"><rect x="1372" y="112" width="143" height="20"/><rect x="1372" y="152" width="143" height="20"/><rect x="1372" y="192" width="143" height="20"/><rect x="1372" y="232" width="143" height="20"/><rect x="1372" y="272" width="143" height="20"/></g>
<g fill="#a3a3a3"><rect x="1556" y="92" width="364" height="20"/><rect x="1556" y="132" width="364" height="20"/><rect x="1556" y="172" width="364" height="20"/><rect x="1556" y="212" width="364" height="20"/><rect x="1556" y="252" width="364" height="20"/><rect x="1556" y="292" width="364" height="20"/></g>
<g fill="#9b9b9b"><rect x="1556" y="112" width="364" height="20"/><rect x="1556" y="152" width="364" height="20"/><rect x="1556" y="192" width="364" height="20"/><rect x="1556" y="232" width="364" height="20"/><rect x="1556" y="272" width="364" height="20"/></g>
<g fill="#9a9a9a"><rect x="1516" y="92" width="39" height="20"/><rect x="1516" y="132" width="39" height="20"/><rect x="1516" y="172" width="39" height="20"/><rect x="1516" y="212" width="39" height="20"/><rect x="1516" y="252" width="39" height="20"/><rect x="1516" y="292" width="39" height="20"/></g>
<path d="M1371.500 92V536M1515.500 92V535M1555.500 92V535" stroke="#5f5f5f"/>
<path d="M1402 112V292" stroke="#666" fill="none"/>
<path d="M1380 93V98M1391 108V118M1402 202H1408M1402 222H1408M1402 282H1408" stroke="#666"/>
<use href="#mn" x="1380" y="102"/><use href="#nul" x="1399" y="102"/>
<use href="#mn" x="1391" y="122"/><use href="#nul" x="1410" y="122"/>
<use href="#pm" x="1402" y="142"/><use href="#nul" x="1421" y="142"/>
<use href="#pm" x="1402" y="162"/><use href="#nul" x="1421" y="162"/>
<use href="#pm" x="1402" y="182"/><use href="#nul" x="1421" y="182"/>
<use href="#tri" x="1418" y="203"/><use href="#tri" x="1418" y="223"/>
<use href="#pm" x="1402" y="243"/><use href="#nul" x="1421" y="243"/>
<use href="#pm" x="1402" y="263"/><use href="#nul" x="1421" y="263"/>
<use href="#tri" x="1418" y="283"/>
<use href="#pm" x="1402" y="303"/><use href="#nul" x="1421" y="303"/>
<text x="1407" y="107">Replace Me</text><text x="1418" y="127">Null Object</text><text x="1428" y="147">cooker</text><text x="1428" y="167">napa</text><text x="1428" y="187">oven</text><text x="1428" y="207">Cube.1</text><text x="1428" y="227">desk</text><text x="1428" y="247">bottom element.2</text><text x="1428" y="267">bottom element.1</text><text x="1428" y="287">sink</text><text x="1428" y="307">Null Object</text>
<use href="#dts" x="1525" y="102"/><use href="#dts" x="1525" y="122"/><use href="#dts" x="1525" y="142"/><use href="#dts" x="1525" y="162"/><use href="#dts" x="1525" y="182"/><use href="#dts" x="1525" y="202"/><use href="#dts" x="1525" y="222"/><use href="#dts" x="1525" y="242"/><use href="#dts" x="1525" y="262"/><use href="#dts" x="1525" y="282"/><use href="#dts" x="1525" y="302"/>
<use href="#tck" x="1565" y="202"/><use href="#tdots" x="1585" y="202"/><use href="#tsb" x="1605" y="201"/>
<use href="#tck" x="1565" y="222"/><use href="#tdots" x="1585" y="222"/><use href="#tsg" x="1605" y="221"/>
<use href="#tsb" x="1565" y="241"/><use href="#tsb" x="1565" y="261"/>
<use href="#tdots" x="1565" y="282"/><use href="#tck" x="1585" y="282"/><use href="#ttr" x="1605" y="282"/><use href="#ttr" x="1625" y="282"/><use href="#ttr" x="1645" y="282"/><use href="#ttr" x="1665" y="282"/>
<use href="#tsb" x="1565" y="301"/>

<!-- attributes -->
<rect x="1371" y="537" width="549" height="501" fill="#989898"/>
<path d="M1371 535.500H1920" stroke="#666"/><path d="M1371 541H1920" stroke="#b5b5b5"/>
<rect x="1374" y="545" width="10" height="10" fill="url(#box)" stroke="#777"/>
<text x="1395" y="553" class="dim">Attributes</text>
<path d="M1371 557.500H1920" stroke="#666"/>
<rect x="1376" y="562" width="11" height="11" fill="url(#gr)"/>
<text x="1397" y="572">Mode</text><text x="1438" y="572">Edit</text><text x="1471" y="572">User Data</text>
<path d="M1371 577.500H1920" stroke="#666"/><path d="M1371 578.500H1920" stroke="#b5b5b5"/>
<path d="M1371.500 541V1038" stroke="#777"/>
<polygon points="1774,568 1787,562 1787,574" fill="#2b2b2b"/>
<polygon points="1806,568 1793,562 1793,574" fill="#8f8f8f"/>
<polygon points="1824,560 1832,575 1816,575" fill="#8f8f8f"/>
<g fill="none" stroke="#2b2b2b"><circle cx="1849" cy="566" r="4.500" stroke-width="1.500"/><path d="M1852 569 1858 575" stroke-width="2.500"/><path d="M1868 567V563A3.500 3.500 0 0 1 1875 563" stroke-width="1.300"/><circle cx="1891" cy="564" r="2.800" stroke-width="1.200"/><circle cx="1891" cy="571" r="2.800" stroke-width="1.200"/><rect x="1904.500" y="562.500" width="10" height="12" fill="#999"/><rect x="1905" y="561" width="10" height="2" fill="#2b2b2b"/><path d="M1907 569H1913M1910 566V572" stroke-width="1.500"/></g>
<rect x="1867" y="567" width="10" height="9" fill="#3a3a3a"/>
</svg>
</body></html>
